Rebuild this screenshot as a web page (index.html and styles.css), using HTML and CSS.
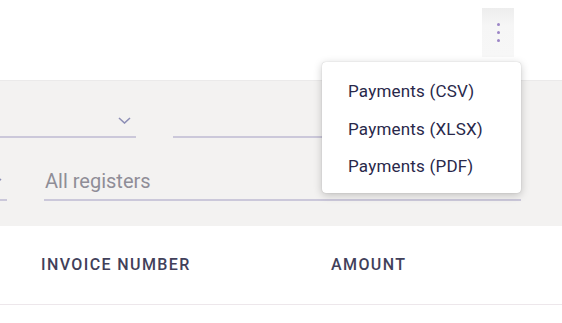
FILE: index.html
```html
<!DOCTYPE html>
<html>
<head>
<meta charset="utf-8">
<link rel="stylesheet" href="styles.css">
</head>
<body>
<div class="page">
  <header class="topbar">
    <button class="kebab" aria-label="More">
      <span class="dot"></span><span class="dot"></span><span class="dot"></span>
    </button>
  </header>
  <section class="filters">
    <div class="row row-1">
      <div class="field select select-a">
        <svg class="chev" width="13" height="7" viewBox="0 0 13 7"><polyline points="1,1 6.5,6 12,1" fill="none" stroke="currentColor" stroke-width="1.6"/></svg>
      </div>
      <div class="field grow"></div>
    </div>
    <div class="row row-2">
      <div class="field select select-b">
        <svg class="chev" width="13" height="7" viewBox="0 0 13 7"><polyline points="1,1 6.5,6 12,1" fill="none" stroke="currentColor" stroke-width="1.6"/></svg>
      </div>
      <div class="field grow input"><span class="placeholder">All registers</span></div>
    </div>
  </section>
  <div class="thead">
    <div class="th">INVOICE NUMBER</div>
    <div class="th">AMOUNT</div>
  </div>
  <ul class="menu">
    <li>Payments (CSV)</li>
    <li>Payments (XLSX)</li>
    <li>Payments (PDF)</li>
  </ul>
</div>
</body>
</html>
```
FILE: styles.css
```css
* { box-sizing: border-box; }
html, body { margin: 0; padding: 0; background: #fff; overflow: hidden; }
body { font-family: Roboto, "Noto Sans", sans-serif; width: 562px; height: 323px; }
.page { position: relative; width: 562px; height: 323px; }

.topbar {
  height: 81px;
  display: flex;
  justify-content: flex-end;
  align-items: flex-start;
  padding: 8px 48px 0 0;
  border-bottom: 1px solid #ebeaea;
}
.kebab {
  width: 32px;
  height: 49px;
  border: 0;
  padding: 0;
  margin: 0;
  background: linear-gradient(#ededed, #f6f6f6 35%, #f7f7f7);
  display: flex;
  flex-direction: column;
  align-items: center;
  justify-content: center;
  gap: 5px;
}
.dot { width: 3px; height: 3px; border-radius: 50%; background: #9c86c6; display: block; }

.filters {
  background: #f3f2f1;
  height: 145px;
  padding: 0 41px 0 0;
  overflow: hidden;
}
.row { display: flex; gap: 37px; }
.field { border-bottom: 2px solid #cbc8da; }
.grow { flex: 1; }
.select { display: flex; justify-content: flex-end; color: #8d8fb6; }
.chev { display: block; margin-right: 5px; }

.row-1 .field { height: 57px; }
.select-a { width: 200px; margin-left: -64px; align-items: flex-end; padding-bottom: 12px; }

.row-2 { margin-top: 28px; }
.row-2 .field { height: 35px; }
.select-b { width: 60px; margin-left: -53px; align-items: center; padding-bottom: 3px; }
.input { padding-top: 3px; padding-left: 1px; }
.placeholder { display: block; font-size: 20px; line-height: 24px; color: #8f8d97; }

.thead {
  height: 79px;
  display: grid;
  grid-template-columns: 290px 1fr;
  align-items: center;
  padding-left: 41px;
  padding-bottom: 1px;
  border-bottom: 1px solid #ede7eb;
}
.th {
  font-size: 16px;
  font-weight: 500;
  letter-spacing: 1.4px;
  color: #41405a;
}

.menu {
  position: absolute;
  left: 322px;
  top: 62px;
  width: 199px;
  height: 131px;
  margin: 0;
  padding: 10px 0 0;
  list-style: none;
  background: #fff;
  border-radius: 4px;
  box-shadow: 0 2px 8px rgba(0,0,0,0.22), 0 0 1px rgba(0,0,0,0.25);
}
.menu li {
  height: 37.5px;
  line-height: 37.5px;
  padding-left: 26px;
  font-size: 17px;
  letter-spacing: 0.2px;
  color: #29284a;
}
.menu li:first-child { margin-top: 1px; }
```
